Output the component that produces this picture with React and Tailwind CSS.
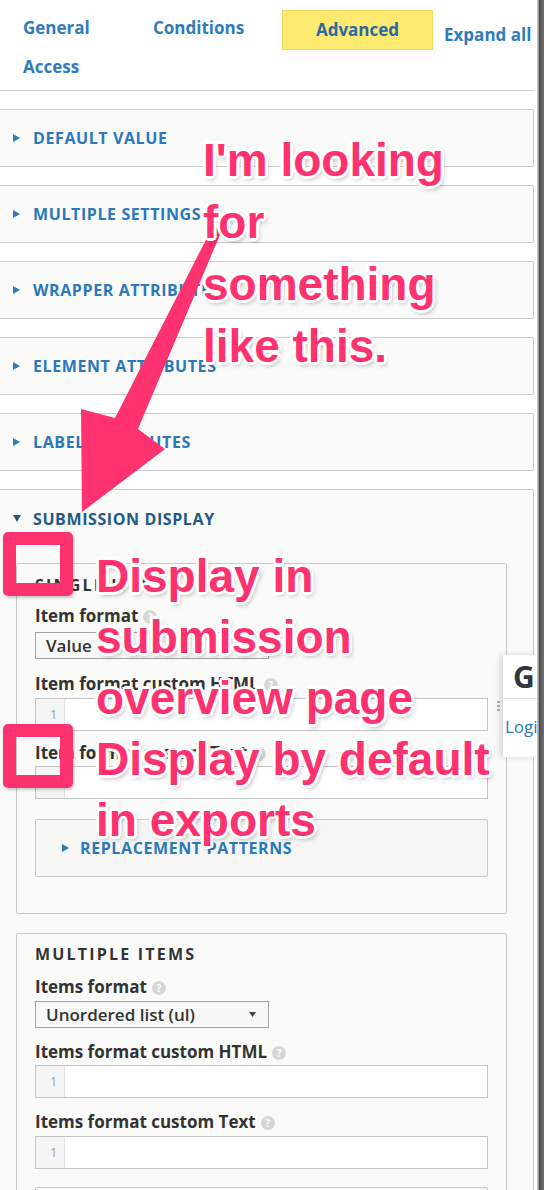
import React from "react";

// Collapsed details rows above the open "Submission display" one
const PANELS = [
  "Default value",
  "Multiple settings",
  "Wrapper attributes",
  "Element attributes",
  "Label attributes",
];

const PINK = "text-[#ff3270]";
const OUTLINE =
  "[text-shadow:3px_0_0_#fff,-3px_0_0_#fff,0_3px_0_#fff,0_-3px_0_#fff,2px_2px_0_#fff,-2px_-2px_0_#fff,2px_-2px_0_#fff,-2px_2px_0_#fff,2px_3px_5px_rgba(0,0,0,0.35)]";

function Caret({ open = false, className = "" }) {
  if (open) {
    return (
      <svg className={className} width="8" height="7" viewBox="0 0 8 7">
        <path d="M0 0h8L4 7z" fill="currentColor" />
      </svg>
    );
  }
  return (
    <svg className={className} width="7" height="8" viewBox="0 0 7 8">
      <path d="M0 0l7 4-7 4z" fill="currentColor" />
    </svg>
  );
}

function Help() {
  return (
    <span className="ml-[5px] inline-flex h-[14px] w-[14px] translate-y-[1px] items-center justify-center rounded-full bg-[#d6d6d6] text-[10px] font-bold leading-none text-white">
      ?
    </span>
  );
}

function Label({ children, className = "" }) {
  return (
    <div className={`flex items-center text-[17px] font-bold leading-[22px] text-[#333] ${className}`}>
      {children}
      <Help />
    </div>
  );
}

function CodeBox({ className = "" }) {
  return (
    <div className={`flex h-[33px] w-[453px] border border-[#c4c4c4] bg-white ${className}`}>
      <div className="flex w-[29px] items-center justify-end border-r border-[#e2e2e2] bg-[#f5f5f5] pr-[7px] text-[12px] text-[#9a9a9a]">
        1
      </div>
    </div>
  );
}

function Select({ value, className = "" }) {
  return (
    <div className={`flex h-[27px] w-[234px] items-center justify-between border border-[#a3a3a3] bg-[#f8f8f8] pl-[10px] pr-[12px] text-[17px] font-semibold text-[#333] ${className}`}>
      <span className="leading-none">{value}</span>
      <svg width="7" height="5" viewBox="0 0 7 5">
        <path d="M0 0h7L3.5 5z" fill="#444" />
      </svg>
    </div>
  );
}

export default function App() {
  return (
    <div className="relative flex h-[1190px] w-[544px] overflow-hidden bg-white [font-family:'Open_Sans',sans-serif]">
      <div className="w-[537px] shrink-0">
        <div className="w-[534px]">
          {/* Tabs */}
          <div className="h-[91px] border-b border-[#cfcfcf]">
            <div className="flex items-start pt-[10px] text-[17px] font-bold leading-[20px]">
              <div className="mt-[8px] w-[153px] pl-[23px] text-[#2f7bbf]">General</div>
              <div className="mt-[8px] w-[129px] text-[#2f7bbf]">Conditions</div>
              <div className="flex h-[40px] w-[151px] items-center justify-center border border-[#efdc5a] bg-[#fbe970] text-[#2c6aa2]">
                Advanced
              </div>
              <div className="ml-[11px] mt-[15px] text-[#2f7bbf]">Expand all</div>
            </div>
            <div className="mt-[7px] pl-[23px] text-[17px] font-bold leading-[20px] text-[#2f7bbf]">
              Access
            </div>
          </div>

          {/* Details */}
          <div className="mt-[18px] flex flex-col gap-[18px]">
            {PANELS.map((p) => (
              <div
                key={p}
                className="flex h-[58px] items-center rounded-r-[2px] border border-l-0 border-[#c9c9c9] bg-[#fafaf8] pl-[13px] text-[#2a78bd]"
              >
                <Caret />
                <span className="ml-[13px] text-[16px] font-bold uppercase tracking-[0.6px]">{p}</span>
              </div>
            ))}

            <div className="h-[800px] rounded-r-[2px] border border-l-0 border-[#c9c9c9] bg-[#fafaf8]">
              <div className="flex h-[57px] items-center pl-[13px] text-[#215a85]">
                <Caret open />
                <span className="ml-[12px] text-[16px] font-bold uppercase tracking-[0.6px]">Submission display</span>
              </div>

              {/* Single item */}
              <div className="ml-[16px] mt-[16px] w-[491px] rounded-[2px] border border-[#c9c9c9] pb-[36px] pl-[18px] pt-[11px]">
                <div className="text-[16px] font-bold uppercase leading-[20px] tracking-[2.2px] text-[#333]">Single item</div>
                <Label className="mt-[10px]">Item format</Label>
                <Select value="Value" className="mt-[5px]" />
                <Label className="mt-[14px]">Item format custom HTML</Label>
                <CodeBox className="mt-[3px]" />
                <Label className="mt-[11px]">Item format custom Text</Label>
                <CodeBox className="mt-[2px]" />
                <div className="mt-[20px] flex h-[58px] w-[453px] items-center rounded-[2px] border border-[#c9c9c9] bg-[#f6f6f5] pl-[26px] text-[#2a78bd]">
                  <Caret />
                  <span className="ml-[11px] text-[16px] font-bold uppercase tracking-[0.6px]">Replacement patterns</span>
                </div>
              </div>

              {/* Multiple items */}
              <div className="ml-[16px] mt-[19px] w-[491px] rounded-[2px] border border-[#c9c9c9] pl-[18px] pt-[10px]">
                <div className="text-[16px] font-bold uppercase leading-[20px] tracking-[2.2px] text-[#333]">Multiple items</div>
                <Label className="mt-[12px]">Items format</Label>
                <Select value="Unordered list (ul)" className="mt-[3px]" />
                <Label className="mt-[13px]">Items format custom HTML</Label>
                <CodeBox className="mt-[2px]" />
                <Label className="mt-[13px]">Items format custom Text</Label>
                <CodeBox className="mt-[3px]" />
                <div className="mt-[18px] h-[58px] w-[453px] rounded-[2px] border border-[#c9c9c9] bg-[#f6f6f5]" />
              </div>
            </div>
          </div>
        </div>
      </div>
      <div className="w-[1px] bg-[#c8c8c8]" />
      <div className="w-[1px] bg-[#9a9a9a]" />
      <div className="flex-1 bg-gradient-to-r from-[#4c4c4c] to-[#727272]" />

      {/* Side widget peeking in */}
      <div className="absolute left-[503px] top-[655px] flex h-[102px] w-[34px] flex-col overflow-hidden bg-white shadow-[-3px_0_6px_rgba(0,0,0,0.15)]">
        <div className="h-[44px] border-b border-[#e1e1e1] pl-[10px] text-[30px] font-bold leading-[44px] text-[#2f363c]">G</div>
        <div className="mt-[17px] pl-[2px] text-[17px] leading-[22px] text-[#2a7db5]">Login</div>
      </div>
      <div className="absolute left-[497px] top-[701px] flex flex-col gap-[2px]">
        <span className="h-[2px] w-[3px] bg-[#aaa]" />
        <span className="h-[2px] w-[3px] bg-[#aaa]" />
        <span className="h-[2px] w-[3px] bg-[#aaa]" />
      </div>

      {/* Annotations */}
      <svg className="absolute left-0 top-0" width="544" height="1190">
        <polygon
          points="82,512 81,409 115,418 213,226 222,230 138,429 165,449"
          fill="#ff3270"
        />
      </svg>
      <div className="absolute left-[3px] top-[532px] h-[64px] w-[70px] rounded-[5px] border-[13px] border-[#ff3270] shadow-[1px_2px_3px_rgba(0,0,0,0.2)]" />
      <div className="absolute left-[3px] top-[724px] h-[64px] w-[70px] rounded-[5px] border-[13px] border-[#ff3270] shadow-[1px_2px_3px_rgba(0,0,0,0.2)]" />

      <div className={`absolute left-[203px] top-[129px] whitespace-nowrap text-[46px] font-bold leading-[62px] ${PINK} ${OUTLINE} [font-family:'Liberation_Sans',Arial,sans-serif]`}>
        <div>I'm looking</div>
        <div>for</div>
        <div>something</div>
        <div>like this.</div>
      </div>
      <div className={`absolute left-[96px] top-[546px] whitespace-nowrap text-[46px] font-bold leading-[61px] ${PINK} ${OUTLINE} [font-family:'Liberation_Sans',Arial,sans-serif]`}>
        <div>Display in</div>
        <div>submission</div>
        <div>overview page</div>
        <div>Display by default</div>
        <div>in exports</div>
      </div>
    </div>
  );
}
